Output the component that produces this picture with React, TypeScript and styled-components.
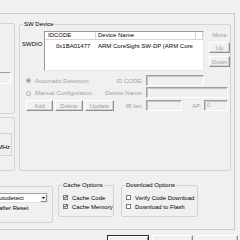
import React from "react";
import styled, { createGlobalStyle } from "styled-components";

const GlobalStyle = createGlobalStyle`
  html, body {
    margin: 0;
    padding: 0;
    background: #f0f0f0;
  }
  body {
    font-family: "Liberation Sans", Arial, sans-serif;
    font-size: 6px;
    color: #000;
  }
`;

const Screen = styled.div`
  width: 240px;
  height: 240px;
  overflow: hidden;
  background: #f0f0f0;
  display: flex;
  flex-direction: column;
  font-family: "Liberation Sans", Arial, sans-serif;
  font-size: 6px;
  line-height: 8px;
`;

const TabStrip = styled.div`
  height: 13px;
  flex-shrink: 0;
`;

// the tab page runs off the left edge of the crop
const TabPage = styled.div`
  box-sizing: border-box;
  flex-shrink: 0;
  width: 255px;
  height: 217px;
  margin-left: -20px;
  border: 1px solid #c9c9c9;
  display: flex;
  flex-direction: column;
`;

const TopRow = styled.div`
  display: flex;
  align-items: flex-start;
  height: 157px;
  flex-shrink: 0;
`;

const BottomRow = styled.div`
  display: flex;
  align-items: flex-start;
`;

const LeftColumn = styled.div`
  width: 34px;
  flex-shrink: 0;
  display: flex;
  flex-direction: column;
  padding-top: 9px;
`;

const GroupBox = styled.fieldset<{ $w: number; $h: number; $mt?: number; $ml?: number }>`
  box-sizing: border-box;
  flex-shrink: 0;
  min-width: 0;
  width: ${(p) => p.$w}px;
  height: ${(p) => p.$h}px;
  margin: ${(p) => p.$mt ?? 0}px 0 0 ${(p) => p.$ml ?? 0}px;
  padding: 0;
  border: 1px solid #d3d3d3;
  border-radius: 2px;
  display: flex;
  flex-direction: column;
`;

const SideGroup = styled(GroupBox)`
  align-items: flex-end;
`;

const Legend = styled.legend`
  margin-left: 3px;
  padding: 0 1px;
  line-height: 8px;
  font-size: 6px;
  color: #000;
`;

const SideEdit = styled.div<{ $mt: number }>`
  box-sizing: border-box;
  width: 30px;
  height: 12px;
  margin: ${(p) => p.$mt}px 3px 0 0;
  background: #f0f0f0;
  border: 1px solid;
  border-color: #a0a0a0 #ffffff #ffffff #a0a0a0;
`;

const ClockBox = styled.div`
  box-sizing: border-box;
  width: 30px;
  height: 23px;
  margin: 15px 2px 0 0;
  border: 1px solid #d3d3d3;
  display: flex;
  align-items: flex-end;
  justify-content: flex-end;
  padding: 0 1px 4px 0;
  color: #000;
`;

const SwBody = styled.div`
  padding: 3px 0 0 2px;
  display: flex;
  flex-direction: column;
`;

const DeviceRow = styled.div`
  display: flex;
  align-items: flex-start;
`;

const PortLabel = styled.div`
  width: 22px;
  flex-shrink: 0;
  margin-top: 9px;
`;

const ListBox = styled.div`
  box-sizing: border-box;
  width: 160px;
  height: 40px;
  flex-shrink: 0;
  background: #fff;
  border: 1px solid;
  border-color: #9a9a9a #e6e6e6 #e6e6e6 #9a9a9a;
  overflow: hidden;
`;

const ListHeader = styled.div`
  display: flex;
  height: 8px;
  border-bottom: 1px solid #d5d5d5;
  box-sizing: border-box;
  line-height: 7px;
`;

const HeaderCell = styled.div<{ $w?: number; $pl?: number }>`
  box-sizing: border-box;
  width: ${(p) => (p.$w ? `${p.$w}px` : "auto")};
  flex: ${(p) => (p.$w ? "0 0 auto" : "1 1 auto")};
  padding-left: ${(p) => p.$pl ?? 0}px;
  border-right: 1px solid #d5d5d5;
  white-space: nowrap;
  overflow: hidden;
`;

const ListRow = styled.div`
  display: flex;
  padding-top: 2px;
`;

const ListCell = styled.div<{ $w: number; $pl: number }>`
  box-sizing: border-box;
  width: ${(p) => p.$w}px;
  flex-shrink: 0;
  padding-left: ${(p) => p.$pl}px;
  white-space: nowrap;
  overflow: hidden;
`;

const MoveColumn = styled.div`
  width: 21px;
  margin-left: 5px;
  flex-shrink: 0;
  display: flex;
  flex-direction: column;
  align-items: center;
`;

const GrayText = styled.div`
  color: #a0a0a0;
  white-space: nowrap;
`;

const PushButton = styled.button<{ $w: number; $h?: number; $mt?: number; $default?: boolean; $disabled?: boolean }>`
  box-sizing: border-box;
  flex-shrink: 0;
  width: ${(p) => p.$w}px;
  height: ${(p) => p.$h ?? 11}px;
  margin: ${(p) => p.$mt ?? 0}px 0 0 0;
  padding: 0;
  font: inherit;
  line-height: 8px;
  white-space: nowrap;
  overflow: hidden;
  background: #f0f0f0;
  color: ${(p) => (p.$disabled ? "#a0a0a0" : "#000")};
  border: 1px solid;
  border-color: ${(p) => (p.$default ? "#2b2b2b" : "#ffffff #8f8f8f #8f8f8f #ffffff")};
  box-shadow: ${(p) => (p.$default ? "inset 1px 1px 0 #fff, inset -1px -1px 0 #8f8f8f" : "inset -1px -1px 0 #d0d0d0")};
  display: flex;
  align-items: center;
  justify-content: center;
`;

const ConfigGrid = styled.div`
  margin: 4px 0 0 4px;
  display: grid;
  grid-template-columns: 76px 38px 1fr;
  grid-template-rows: 11px 12px 11px;
  column-gap: 3px;
  row-gap: 1px;
`;

const RadioRow = styled.div`
  display: flex;
  align-items: center;
  color: #a0a0a0;
  white-space: nowrap;
`;

const Radio = styled.span<{ $checked?: boolean }>`
  box-sizing: border-box;
  width: 5px;
  height: 5px;
  margin-right: 4px;
  border-radius: 50%;
  border: 1px solid #a8a8a8;
  background: ${(p) => (p.$checked ? "radial-gradient(circle, #9a9a9a 0 1px, #f4f4f4 1.2px)" : "#f4f4f4")};
`;

const ButtonGroup = styled.div`
  display: flex;
  gap: 2px;
`;

const FieldLabel = styled.div`
  display: flex;
  align-items: center;
  justify-content: flex-end;
  color: #a0a0a0;
  white-space: nowrap;
`;

const FieldCell = styled.div`
  display: flex;
  align-items: flex-start;
`;

const Field = styled.div<{ $w: number }>`
  box-sizing: border-box;
  width: ${(p) => p.$w}px;
  height: 11px;
  flex-shrink: 0;
  background: #f0f0f0;
  border: 1px solid;
  border-color: #a0a0a0 #ffffff #ffffff #a0a0a0;
  box-shadow: inset 1px 1px 0 #c4c4c4;
  color: #b0b0b0;
  padding-left: 2px;
  line-height: 9px;
`;

const ApLabel = styled.div`
  margin: 2px 2px 0 10px;
  color: #a0a0a0;
`;

const ComboBox = styled.div`
  box-sizing: border-box;
  width: 66px;
  height: 10px;
  margin-top: 6px;
  background: #fff;
  border: 1px solid;
  border-color: #a0a0a0 #e3e3e3 #e3e3e3 #a0a0a0;
  display: flex;
  align-items: center;
  padding-left: 12px;
  line-height: 8px;
`;

const ComboText = styled.span`
  flex: 1;
  white-space: nowrap;
`;

const ComboArrow = styled.span`
  box-sizing: border-box;
  width: 7px;
  height: 8px;
  background: #f0f0f0;
  border: 1px solid;
  border-color: #fff #8f8f8f #8f8f8f #fff;
  display: flex;
  align-items: center;
  justify-content: center;
`;

const PlainLine = styled.div<{ $mt?: number; $ml?: number }>`
  margin: ${(p) => p.$mt ?? 0}px 0 0 ${(p) => p.$ml ?? 0}px;
  white-space: nowrap;
`;

const OptionList = styled.div`
  padding: 4px 0 0 4px;
  display: flex;
  flex-direction: column;
`;

const CheckRow = styled.div`
  height: 9px;
  display: flex;
  align-items: center;
  white-space: nowrap;
`;

const CheckBoxIcon = styled.svg`
  width: 5px;
  height: 5px;
  margin-right: 4px;
  flex-shrink: 0;
`;

const DialogButtons = styled.div`
  display: flex;
  gap: 3px;
  margin-top: 5px;
  padding-left: 107px;
`;

const Check: React.FC<{ checked?: boolean }> = ({ checked }) => (
  <CheckBoxIcon viewBox="0 0 5 5">
    <rect x="0.5" y="0.5" width="4" height="4" fill="#fff" stroke="#7a7a7a" strokeWidth="1" />
    {checked && <path d="M1.2 2.3 L2.1 3.3 L3.9 1.1" fill="none" stroke="#111" strokeWidth="0.9" />}
  </CheckBoxIcon>
);

const App: React.FC = () => {
  return (
    <>
      <GlobalStyle />
      <Screen>
        <TabStrip />
        <TabPage>
          <TopRow>
            <LeftColumn>
              <SideGroup $w={34} $h={91}>
                <SideEdit $mt={48} />
              </SideGroup>
              <SideGroup $w={34} $h={54} $mt={3}>
                <ClockBox>10 MHz</ClockBox>
              </SideGroup>
            </LeftColumn>

            <GroupBox $w={212} $h={151} $mt={6} $ml={4}>
              <Legend>SW Device</Legend>
              <SwBody>
                <DeviceRow>
                  <PortLabel>SWDIO</PortLabel>
                  <ListBox>
                    <ListHeader>
                      <HeaderCell $w={51} $pl={3}>IDCODE</HeaderCell>
                      <HeaderCell $w={100} $pl={2}>Device Name</HeaderCell>
                      <HeaderCell />
                    </ListHeader>
                    <ListRow>
                      <ListCell $w={51} $pl={11}>0x1BA01477</ListCell>
                      <ListCell $w={99} $pl={2}>ARM CoreSight SW-DP (ARM Core</ListCell>
                    </ListRow>
                  </ListBox>
                  <MoveColumn>
                    <GrayText>Move</GrayText>
                    <PushButton $w={21} $mt={3} $disabled>Up</PushButton>
                    <PushButton $w={21} $mt={3} $disabled>Down</PushButton>
                  </MoveColumn>
                </DeviceRow>

                <ConfigGrid>
                  <RadioRow>
                    <Radio $checked />
                    Automatic Detection
                  </RadioRow>
                  <FieldLabel>ID CODE:</FieldLabel>
                  <FieldCell>
                    <Field $w={58} />
                  </FieldCell>

                  <RadioRow>
                    <Radio />
                    Manual Configuration
                  </RadioRow>
                  <FieldLabel>Device Name:</FieldLabel>
                  <FieldCell>
                    <Field $w={82} />
                  </FieldCell>

                  <ButtonGroup>
                    <PushButton $w={27} $disabled>Add</PushButton>
                    <PushButton $w={28} $disabled>Delete</PushButton>
                    <PushButton $w={29} $disabled>Update</PushButton>
                  </ButtonGroup>
                  <FieldLabel>IR len:</FieldLabel>
                  <FieldCell>
                    <Field $w={36} />
                    <ApLabel>AP:</ApLabel>
                    <Field $w={24}>0</Field>
                  </FieldCell>
                </ConfigGrid>
              </SwBody>
            </GroupBox>
          </TopRow>

          <BottomRow>
            <GroupBox $w={72} $h={37} $mt={15}>
              <ComboBox>
                <ComboText>Autodetect</ComboText>
                <ComboArrow>
                  <svg width="3" height="2" viewBox="0 0 3 2">
                    <path d="M0 0 H3 L1.5 2 Z" fill="#000" />
                  </svg>
                </ComboArrow>
              </ComboBox>
              <PlainLine $mt={1} $ml={3}>Stop after Reset</PlainLine>
            </GroupBox>

            <GroupBox $w={56} $h={36} $mt={10} $ml={5}>
              <Legend>Cache Options</Legend>
              <OptionList>
                <CheckRow>
                  <Check checked />
                  Cache Code
                </CheckRow>
                <CheckRow>
                  <Check checked />
                  Cache Memory
                </CheckRow>
              </OptionList>
            </GroupBox>

            <GroupBox $w={77} $h={36} $mt={10} $ml={7}>
              <Legend>Download Options</Legend>
              <OptionList>
                <CheckRow>
                  <Check />
                  Verify Code Download
                </CheckRow>
                <CheckRow>
                  <Check />
                  Download to Flash
                </CheckRow>
              </OptionList>
            </GroupBox>
          </BottomRow>
        </TabPage>

        <DialogButtons>
          <PushButton $w={42} $h={14} $default>OK</PushButton>
          <PushButton $w={41} $h={14}>Cancel</PushButton>
          <PushButton $w={42} $h={14} $disabled>Apply</PushButton>
        </DialogButtons>
      </Screen>
    </>
  );
};

export default App;
